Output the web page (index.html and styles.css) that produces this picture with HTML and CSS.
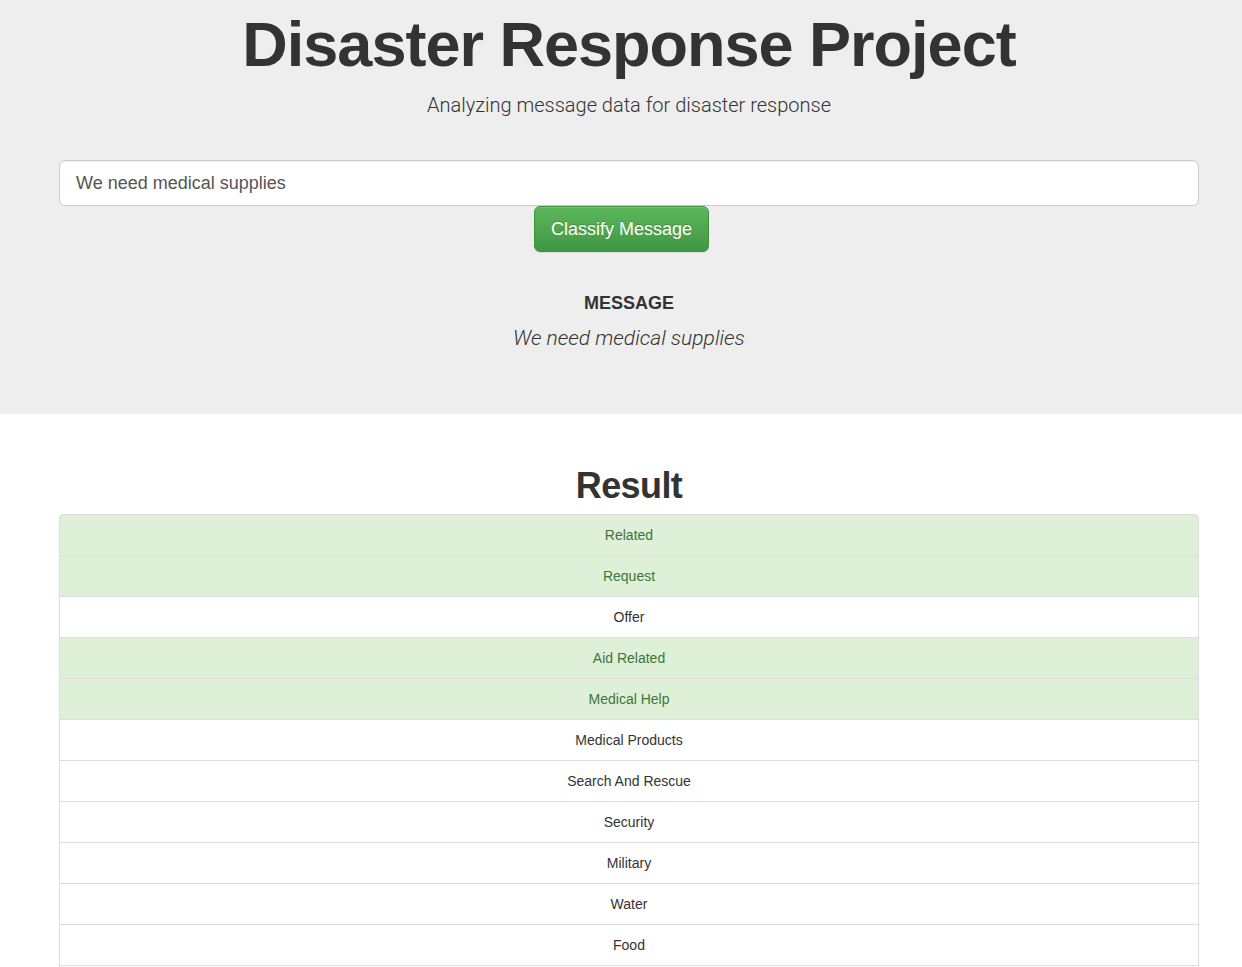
FILE: index.html
```html
<!DOCTYPE html>
<html lang="en">
<head>
<meta charset="utf-8">
<title>Disaster Response Project</title>
<link rel="stylesheet" href="styles.css">
</head>
<body>
<div class="jumbotron">
  <div class="container">
    <h1 class="title">Disaster Response Project</h1>
    <p class="subtitle">Analyzing message data for disaster response</p>
    <form class="classify-form">
      <input class="query-input" type="text" name="query" value="We need medical supplies">
      <div class="button-row">
        <button type="button" class="btn-success">Classify Message</button>
      </div>
    </form>
    <div class="message-block">
      <h4 class="message-label">MESSAGE</h4>
      <p class="message-text">We need medical supplies</p>
    </div>
  </div>
</div>
<div class="container">
  <h1 class="result-title">Result</h1>
  <ul class="list-group">
    <li class="list-item success">Related</li>
    <li class="list-item success">Request</li>
    <li class="list-item">Offer</li>
    <li class="list-item success">Aid Related</li>
    <li class="list-item success">Medical Help</li>
    <li class="list-item">Medical Products</li>
    <li class="list-item">Search And Rescue</li>
    <li class="list-item">Security</li>
    <li class="list-item">Military</li>
    <li class="list-item">Water</li>
    <li class="list-item">Food</li>
    <li class="list-item">Shelter</li>
    <li class="list-item">Clothing</li>
    <li class="list-item">Money</li>
    <li class="list-item">Missing People</li>
    <li class="list-item">Refugees</li>
    <li class="list-item">Death</li>
    <li class="list-item">Other Aid</li>
  </ul>
</div>
</body>
</html>
```

FILE: styles.css
```css
* { box-sizing: border-box; }
html, body { margin: 0; padding: 0; }
body {
  font-family: "Liberation Sans", Arial, sans-serif;
  font-size: 14px;
  line-height: 1.42857;
  color: #333;
  background: #fff;
}
.container {
  width: 1140px;
  margin-left: 59px;
}
.jumbotron {
  background: #eeeeee;
  padding: 10px 0 0 0;
  height: 414px;
}
.title {
  margin: 0;
  font-size: 63px;
  line-height: 69px;
  font-weight: 700;
  text-align: center;
  letter-spacing: -1px;
  color: #333;
}
.subtitle {
  margin: 11px 0 0 0;
  font-family: Roboto, "Liberation Sans", sans-serif;
  font-weight: 300;
  font-size: 20px;
  line-height: 30px;
  text-align: center;
  color: #333;
}
.classify-form {
  margin-top: 40px;
}
.query-input {
  display: block;
  width: 100%;
  height: 46px;
  padding: 10px 16px;
  font-family: "Liberation Sans", Arial, sans-serif;
  font-size: 18px;
  color: #555;
  background: #fff;
  border: 1px solid #ccc;
  border-radius: 6px;
  box-shadow: inset 0 1px 1px rgba(0,0,0,0.075);
  outline: none;
}
.button-row {
  padding-left: 475px;
}
.btn-success {
  display: block;
  width: 175px;
  height: 46px;
  padding: 0;
  white-space: nowrap;
  font-family: "Liberation Sans", Arial, sans-serif;
  font-size: 18px;
  line-height: 44px;
  color: #fff;
  background: linear-gradient(to bottom, #5cb85c 0%, #419641 100%);
  border: 1px solid #3e8f3e;
  border-radius: 6px;
  text-shadow: 0 -1px 0 rgba(0,0,0,0.2);
  box-shadow: inset 0 1px 0 rgba(255,255,255,0.15), 0 1px 1px rgba(0,0,0,0.075);
  cursor: pointer;
}
.message-block {
  margin-top: 40px;
  text-align: center;
}
.message-label {
  margin: 0;
  font-size: 18px;
  line-height: 22px;
  font-weight: 700;
  color: #333;
}
.message-text {
  margin: 11px 0 0 0;
  font-family: Roboto, "Liberation Sans", sans-serif;
  font-weight: 300;
  font-style: italic;
  font-size: 21px;
  line-height: 26px;
  color: #333;
}
.result-title {
  margin: 0;
  padding-top: 50px;
  font-size: 36px;
  line-height: 44px;
  font-weight: 700;
  text-align: center;
  letter-spacing: -0.6px;
  color: #333;
  margin-bottom: 6px;
}
.list-group {
  list-style: none;
  margin: 0;
  padding: 0;
}
.list-item {
  display: block;
  padding: 10px 15px;
  line-height: 20px;
  font-size: 14px;
  text-align: center;
  background: #fff;
  border: 1px solid #ddd;
  margin-bottom: -1px;
  color: #333;
}
.list-item:first-child {
  border-top-left-radius: 4px;
  border-top-right-radius: 4px;
}
.list-item.success {
  background: #dff0d8;
  color: #3c763d;
}
```
